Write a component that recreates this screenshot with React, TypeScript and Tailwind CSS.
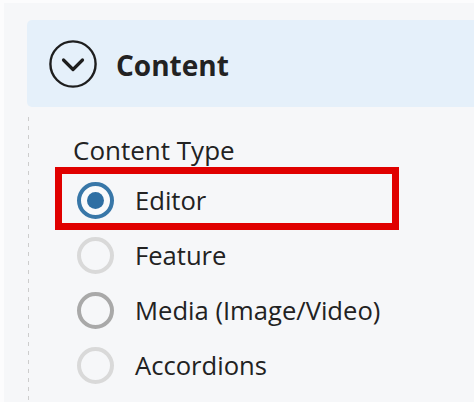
import React from "react";

type Opt = { label: string; state: "checked" | "dark" | "light" };

const options: Opt[] = [
  { label: "Editor", state: "checked" },
  { label: "Feature", state: "light" },
  { label: "Media (Image/Video)", state: "dark" },
  { label: "Accordions", state: "light" },
];

function Radio({ state }: { state: Opt["state"] }) {
  if (state === "checked") {
    return (
      <div className="w-[37px] h-[37px] rounded-full border-[4px] border-[#3877a8] flex items-center justify-center shrink-0 bg-[#f9fafb]">
        <div className="w-[17px] h-[17px] rounded-full bg-[#2f6fa3]" />
      </div>
    );
  }
  if (state === "dark") {
    return <div className="w-[37px] h-[37px] rounded-full border-[4px] border-[#a9a9a9] shrink-0" />;
  }
  return <div className="w-[37px] h-[37px] rounded-full border-[4px] border-[#d9d9d9] shrink-0" />;
}

export default function App() {
  return (
    <div className="w-[474px] h-[402px] bg-[#fcfcfd] pt-[3px] pl-[4px] overflow-hidden font-['Open_Sans',sans-serif] text-[#222222]">
      <div className="h-full bg-[#f6f7f9] pt-[17px] pl-[23px] flex flex-col">
        <div className="h-[87px] bg-[#e5f0fa] rounded-l-[5px] flex items-center pl-[22px] shrink-0">
          <svg width="48" height="48" viewBox="0 0 48 48" fill="none">
            <circle cx="24" cy="24" r="22.6" stroke="#1e1e1e" strokeWidth="2.4" />
            <path d="M14.5 20 L24 29.5 L33.5 20" stroke="#1e1e1e" strokeWidth="3.2" strokeLinecap="round" strokeLinejoin="round" />
          </svg>
          <span className="ml-[19px] pt-[3px] text-[28px] font-bold leading-none">Content</span>
        </div>
        <div className="flex flex-1">
          <div className="w-px ml-[1px] mt-[10px] bg-[repeating-linear-gradient(to_bottom,#cdcdcd_0px,#cdcdcd_4px,transparent_4px,transparent_9px)]" />
          <div className="pl-[44px] pt-[26px] flex flex-col">
            <div className="h-[34px] leading-[34px] text-[26px]">Content Type</div>
            <div className="mt-[6px] flex flex-col pl-[4px]">
              {options.map((o) => (
                <div key={o.label} className="relative h-[55px] flex items-center gap-[21px]">
                  {o.state === "checked" && (
                    <div className="absolute left-[-22px] top-[-6px] w-[344px] h-[63px] border-[7px] border-[#e00000] pointer-events-none" />
                  )}
                  <Radio state={o.state} />
                  <span className="text-[25.6px] leading-none whitespace-nowrap">{o.label}</span>
                </div>
              ))}
            </div>
          </div>
        </div>
      </div>
    </div>
  );
}
